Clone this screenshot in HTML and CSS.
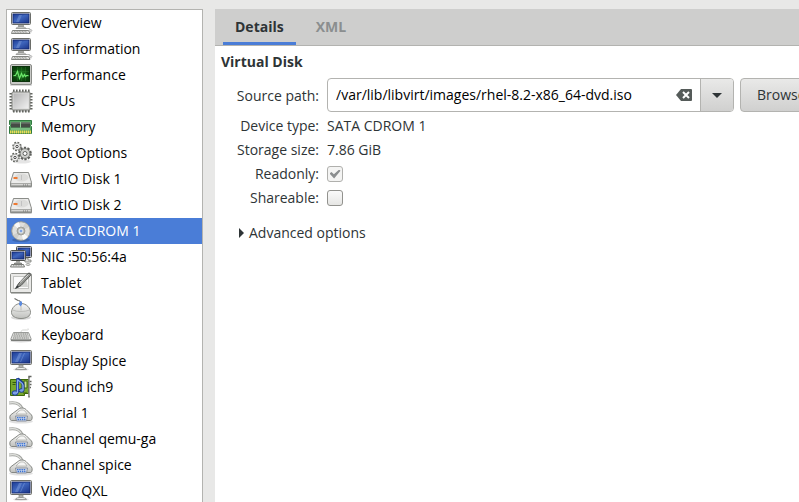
FILE: index.html
```html
<!DOCTYPE html>
<html lang="en">

<head>
  <meta charset="UTF-8">
  <title>Virtual Machine Details</title>
  <link rel="stylesheet" href="styles.css">
</head>

<body>
  <svg class="sprite" aria-hidden="true">
    <defs>
      <linearGradient id="screen" x1="0" y1="0" x2="1" y2="1">
        <stop offset="0" stop-color="#1d3c94"/>
        <stop offset=".45" stop-color="#3f66bd"/>
        <stop offset="1" stop-color="#1a3488"/>
      </linearGradient>
      <linearGradient id="metal" x1="0" y1="0" x2="0" y2="1">
        <stop offset="0" stop-color="#f8f8f7"/>
        <stop offset="1" stop-color="#bfc0bd"/>
      </linearGradient>
      <linearGradient id="chip" x1="0" y1="0" x2="1" y2="1">
        <stop offset="0" stop-color="#b4b4b4"/>
        <stop offset="1" stop-color="#f0f0f0"/>
      </linearGradient>
      <radialGradient id="scope">
        <stop offset="0" stop-color="#1f7d1f"/>
        <stop offset="1" stop-color="#0a3f0c"/>
      </radialGradient>
    </defs>

    <symbol id="computer" viewBox="0 0 24 24">
      <ellipse cx="13" cy="21" rx="10" ry="2" fill="#000" opacity=".12"/>
      <rect x="2.500" y="1.500" width="19" height="12" rx="1" fill="#dcdcda" stroke="#6b6d69"/>
      <rect x="4" y="3" width="16" height="9" fill="url(#screen)" stroke="#12276e" stroke-width=".8"/>
      <path d="M10 4h3l-3 7H7z" fill="#8fa9e2" opacity=".4"/>
      <path d="M9 14h6v2h-6z" fill="#a5a6a3"/>
      <path d="M7 17.500c0-1 2-1.500 5-1.500s5 .5 5 1.500z" fill="#f3f3f2" stroke="#8a8c88" stroke-width=".8"/>
      <path d="M3.500 19.500h16l1.500 3H2.500z" fill="#e8e8e6" stroke="#777975" stroke-width=".9"/>
      <path d="M5 20.500h13M4.500 21.500h14" stroke="#8c8e8a" stroke-dasharray="1 .6" stroke-width=".7"/>
      <path d="M17 17.500c3 0 5 0 4 1.500" fill="none" stroke="#a9aba7"/>
      <ellipse cx="21.500" cy="19.500" rx="1.500" ry=".9" fill="#ddd" stroke="#999" stroke-width=".5"/>
    </symbol>

    <symbol id="display" viewBox="0 0 24 24">
      <ellipse cx="12" cy="20.500" rx="8" ry="1.500" fill="#000" opacity=".1"/>
      <rect x="1.500" y="1.500" width="21" height="14" rx="1" fill="#dcdcda" stroke="#6b6d69"/>
      <rect x="3" y="3" width="18" height="11" fill="url(#screen)" stroke="#12276e" stroke-width=".8"/>
      <path d="M10 4h3l-4 9H6zM15 4h1l-4 9h-1z" fill="#8fa9e2" opacity=".4"/>
      <path d="M10 16h4v3h-4z" fill="#b5b6b3" stroke="#858783" stroke-width=".7"/>
      <path d="M6.500 20.500c0-1.500 3-2 5.500-2s5.500.5 5.500 2z" fill="#f3f3f2" stroke="#8a8c88" stroke-width=".8"/>
    </symbol>

    <symbol id="performance" viewBox="0 0 24 24">
      <rect x="1" y="20" width="22" height="3" rx="1" fill="#000" opacity=".15"/>
      <rect x="1.500" y="1.500" width="21" height="20" rx="1.500" fill="#c9cac7" stroke="#8b8d89"/>
      <rect x="3.500" y="3.500" width="17" height="15" fill="url(#scope)" stroke="#0b320c"/>
      <path d="M4 8.500h16M4 13.500h16M8.500 4v14M12.500 4v14M16.500 4v14" stroke="#39963a" stroke-width=".3"/>
      <path d="M4.500 12.500h2l2-4 2 7 2-5 1.500 3.500 1.500-2.500 1 2 1-1h2" fill="none" stroke="#6ce86c" stroke-width="1.200"/>
    </symbol>

    <symbol id="cpu" viewBox="0 0 24 24">
      <rect x="3" y="20" width="18" height="3" fill="#000" opacity=".12"/>
      <path d="M4 1.800h17M4 22.200h17M1.800 4v17M22.200 4v17" stroke="#62645f" stroke-width="2.600" stroke-dasharray="1.600 1.400"/>
      <rect x="3" y="3" width="18" height="18" rx="1" fill="#d8d8d6" stroke="#7e807c"/>
      <rect x="4.500" y="4.500" width="15" height="15" fill="url(#chip)"/>
    </symbol>

    <symbol id="memory" viewBox="0 0 24 24">
      <path d="M.5 5.500h22v4l-1 1 1 1v7H.5v-7l1-1-1-1z" fill="#57a464" stroke="#2f7a3f"/>
      <path d="M2 7.500h9v5H2zM12 7.500h9v5h-9z" fill="#454b45"/>
      <path d="M2 8h9M12 8h9" stroke="#7b837b"/>
      <path d="M11.500 7v5.500" stroke="#8dce94"/>
      <path d="M2 14h19" stroke="#9ad29a"/>
      <path d="M1 17h21" stroke="#ecdc55" stroke-width="3" stroke-dasharray="1.400 .6"/>
    </symbol>

    <symbol id="gears" viewBox="0 0 24 24">
      <ellipse cx="13" cy="20.500" rx="9" ry="2" fill="#000" opacity=".1"/>
      <circle cx="8" cy="5.500" r="3.900" fill="#efefee" stroke="#62645f" stroke-width="1.800" stroke-dasharray="1.700 1.360"/>
      <circle cx="8" cy="5.500" r="3.300" fill="#f4f4f3" stroke="#8b8d89" stroke-width=".6"/>
      <circle cx="8" cy="5.500" r="1.200" fill="#fff" stroke="#333" stroke-width=".9"/>
      <circle cx="6" cy="16.500" r="3.900" fill="#efefee" stroke="#62645f" stroke-width="1.800" stroke-dasharray="1.700 1.360"/>
      <circle cx="6" cy="16.500" r="3.300" fill="#f4f4f3" stroke="#8b8d89" stroke-width=".6"/>
      <circle cx="6" cy="16.500" r="1.200" fill="#fff" stroke="#333" stroke-width=".9"/>
      <circle cx="16" cy="12.500" r="5.700" fill="#d0d1ce" stroke="#5d5f5b" stroke-width="2.200" stroke-dasharray="2.200 1.380"/>
      <circle cx="16" cy="12.500" r="4.800" fill="#d0d1ce" stroke="#70726e" stroke-width=".8"/>
      <circle cx="16" cy="12.500" r="2" fill="#fff" stroke="#555753" stroke-width=".9"/>
    </symbol>

    <symbol id="disk" viewBox="0 0 24 24">
      <rect x="1" y="18" width="22" height="3" rx="1.500" fill="#000" opacity=".2"/>
      <path d="M4.500 5.500h15l3 10v4h-21v-4z" fill="#a9aaa7" stroke="#8b8d89" stroke-linejoin="round"/>
      <path d="M5 6h14l3 9.500-1 .5H3l-1-.5z" fill="#ececeb"/>
      <ellipse cx="12.500" cy="10.500" rx="7" ry="4" fill="#dcdcda"/>
      <path d="M2.500 17.500h19" stroke="#d6d6d4"/>
      <path d="M14 18h6" stroke="#777" stroke-dasharray="1 1"/>
      <path d="M12.500 8v5" stroke="#bbb" stroke-width=".8"/>
      <rect x="4.500" y="10" width="4" height="2" fill="#ee7a33"/>
    </symbol>

    <symbol id="cdrom" viewBox="0 0 24 24">
      <ellipse cx="12" cy="21" rx="9" ry="2" fill="#000" opacity=".18"/>
      <circle cx="12" cy="12" r="9.300" fill="#dfdfdc" stroke="#9a9b93"/>
      <path d="M12 12L5 6a9 9 0 0 1 5-3zM12 12l7 6a9 9 0 0 1-5 3z" fill="#fff" opacity=".8"/>
      <path d="M12 12l4-8a9 9 0 0 1 4 4zM12 12l-4 8a9 9 0 0 1-4-4z" fill="#c7c8c3" opacity=".7"/>
      <circle cx="12" cy="12" r="4" fill="#b5b6b0" stroke="#90918b" stroke-width=".7"/>
      <circle cx="12" cy="12" r="2" fill="#7fa3e4" stroke="#f1f1ef"/>
    </symbol>

    <symbol id="network" viewBox="0 0 24 24">
      <rect x="7.500" y="1.500" width="15" height="11" rx="1" fill="#e3e3e1" stroke="#4c4e4a"/>
      <rect x="9" y="3" width="12" height="8" fill="url(#screen)" stroke="#12276e" stroke-width=".8"/>
      <path d="M15 13h4v2h3v2h-6z" fill="#dededc" stroke="#777975" stroke-width=".8"/>
      <rect x="1.500" y="5.500" width="15" height="10" rx="1" fill="#e3e3e1" stroke="#4c4e4a"/>
      <rect x="3" y="7" width="12" height="7" fill="url(#screen)" stroke="#12276e" stroke-width=".8"/>
      <path d="M7 16h4v1.500H7z" fill="#a5a6a3"/>
      <path d="M5 18.500c1-1 7-1 8 0z" fill="#f3f3f2" stroke="#777975" stroke-width=".8"/>
      <path d="M2.500 19.500h12l1 2.500h-14z" fill="#e8e8e6" stroke="#6b6d69" stroke-width=".9"/>
      <path d="M4 20.800h9" stroke="#8c8e8a" stroke-dasharray="1 .6"/>
      <ellipse cx="19" cy="19.500" rx="2" ry="1" fill="#e5e5e3" stroke="#858783" stroke-width=".7"/>
    </symbol>

    <symbol id="tablet" viewBox="0 0 24 24">
      <path d="M2.500 2.500h19c1 0 1 1 1 1v17c0 1-1 1-1 1h-20v-18c0-1 1-1 1-1z" fill="#e9e9e7" stroke="#90928e"/>
      <path d="M2 22h20" stroke="#777975"/>
      <rect x="4.500" y="5.500" width="15" height="12" fill="#fbfbfb" stroke="#c3c4c1"/>
      <path d="M7 16c4-1 6-5 11-6l1 6z" fill="#d2d3d0"/>
      <path d="M6.500 17.500l3-5L19 2.500c1-1 3.500 0 2.500 2L12 14.500z" fill="#8f918d" stroke="#4b4d49" stroke-width=".9"/>
      <path d="M11 11.500l8.500-8" stroke="#dededc"/>
      <path d="M6.500 17.500l2-3 1.500 1.500z" fill="#2e3436"/>
    </symbol>

    <symbol id="mouse" viewBox="0 0 24 24">
      <ellipse cx="12" cy="20.500" rx="10" ry="2.500" fill="#000" opacity=".15"/>
      <path d="M5.500 1.500l3.500 2c2 0 3 1 3 4" fill="none" stroke="#6b6d69" stroke-width="1.200"/>
      <path d="M12 6.500c5.500 0 9.500 4.500 9.500 9 0 3.500-4 6-9.500 6s-9.500-2.500-9.500-6c0-4.500 4-9 9.500-9z" fill="url(#metal)" stroke="#888a85"/>
      <path d="M3.500 13c4 2 13 2 17 0M12 8v5.500" fill="none" stroke="#b4b5b2" stroke-width=".8"/>
      <path d="M10.500 4.500h2.500v3l-1.500 2-1.500-2z" fill="#5b8be0"/>
    </symbol>

    <symbol id="keyboard" viewBox="0 0 24 24">
      <ellipse cx="12" cy="18" rx="11" ry="1.500" fill="#000" opacity=".15"/>
      <path d="M12 10c0-3 1-3 4-3s4 0 3-1.500" fill="none" stroke="#d5d6d3"/>
      <path d="M4.500 9.500h15l2.500 6v1.500H2v-1.500z" fill="#e4e4e2" stroke="#90928e" stroke-width=".9"/>
      <path d="M5 11h14M4.500 13h15M4 15h16" stroke="#767874" stroke-width="1.200" stroke-dasharray="1.300 .5"/>
      <path d="M2 17.200h20" stroke="#5f615d"/>
    </symbol>

    <symbol id="sound" viewBox="0 0 24 24">
      <path d="M1.500 4.500h18v14h-4v2h-14z" fill="#78a82c" stroke="#3f6a0c"/>
      <path d="M3.500 7.500h4M3.500 9.500h3M14 18h4" stroke="#375d0c"/>
      <path d="M15 6h3v7h-3z" fill="#cde29c" stroke="#41660f"/>
      <path d="M22.500 1.500h-2.500v21M20 6.500h2.500M20 9.500h2.500M20 12.500h2" fill="none" stroke="#62645f" stroke-width="1.500"/>
      <path d="M20.200 3v18" stroke="#d7d8d5" stroke-width=".6"/>
      <path d="M8.500 18V3.500c1 2 5 2.500 5.500 6V15" fill="none" stroke="#183b8e" stroke-width="3"/>
      <ellipse cx="6" cy="18" rx="3" ry="2.200" fill="#7b9fe8" stroke="#183b8e"/>
      <ellipse cx="12.500" cy="15.500" rx="2.500" ry="1.800" fill="#7b9fe8" stroke="#183b8e"/>
      <path d="M8.500 18V4.500c1 2 5 2.500 5.500 5.500v5" fill="none" stroke="#8aabef" stroke-width="1.400"/>
    </symbol>

    <symbol id="serial" viewBox="0 0 24 24">
      <ellipse cx="12" cy="20.500" rx="12" ry="2" fill="#000" opacity=".12"/>
      <path d="M0 2c6-1 11 0 13.500 6" fill="none" stroke="#a5a7a3" stroke-width="3"/>
      <path d="M0 2c6-1 10 0 12.500 5" fill="none" stroke="#e0e1de" stroke-width="1.300"/>
      <path d="M9 8.500c2-2 6-2 8 0l5.500 5.500c1 1 1 5.500-1 5.500h-19c-2 0-2-4.500-1-5.500z" fill="url(#metal)" stroke="#858783"/>
      <path d="M10 10c2-1.500 4-1.500 6 0l2 3H7z" fill="#f5f5f4" stroke="#a7a9a5" stroke-width=".7"/>
      <path d="M6.500 15h12l-1 5h-10z" fill="#dbe2ee" stroke="#777f8d" stroke-width=".8"/>
      <path d="M8 16.700h9M8.500 18.500h8" stroke="#3c73d2" stroke-width="1.300" stroke-dasharray="1.500 .7"/>
    </symbol>
  </svg>

  <div class="window">
    <nav class="hw-list" aria-label="Hardware">
      <button class="hw-item"><svg class="icon"><use href="#computer"/></svg>Overview</button>
      <button class="hw-item"><svg class="icon"><use href="#computer"/></svg>OS information</button>
      <button class="hw-item"><svg class="icon"><use href="#performance"/></svg>Performance</button>
      <button class="hw-item"><svg class="icon"><use href="#cpu"/></svg>CPUs</button>
      <button class="hw-item"><svg class="icon"><use href="#memory"/></svg>Memory</button>
      <button class="hw-item"><svg class="icon"><use href="#gears"/></svg>Boot Options</button>
      <button class="hw-item"><svg class="icon"><use href="#disk"/></svg>VirtIO Disk 1</button>
      <button class="hw-item"><svg class="icon"><use href="#disk"/></svg>VirtIO Disk 2</button>
      <button class="hw-item selected"><svg class="icon"><use href="#cdrom"/></svg>SATA CDROM 1</button>
      <button class="hw-item"><svg class="icon"><use href="#network"/></svg>NIC :50:56:4a</button>
      <button class="hw-item"><svg class="icon"><use href="#tablet"/></svg>Tablet</button>
      <button class="hw-item"><svg class="icon"><use href="#mouse"/></svg>Mouse</button>
      <button class="hw-item"><svg class="icon"><use href="#keyboard"/></svg>Keyboard</button>
      <button class="hw-item"><svg class="icon"><use href="#display"/></svg>Display Spice</button>
      <button class="hw-item"><svg class="icon"><use href="#sound"/></svg>Sound ich9</button>
      <button class="hw-item"><svg class="icon"><use href="#serial"/></svg>Serial 1</button>
      <button class="hw-item"><svg class="icon"><use href="#serial"/></svg>Channel qemu-ga</button>
      <button class="hw-item"><svg class="icon"><use href="#serial"/></svg>Channel spice</button>
      <button class="hw-item"><svg class="icon"><use href="#display"/></svg>Video QXL</button>
    </nav>

    <main class="details">
      <div class="tabs" role="tablist">
        <button class="tab active" role="tab" aria-selected="true">Details</button>
        <button class="tab" role="tab" aria-selected="false">XML</button>
      </div>

      <form class="panel">
        <h1>Virtual Disk</h1>

        <div class="fields">
          <label for="source">Source path:</label>
          <div class="source-row">
            <div class="combo">
              <input type="text" id="source" value="/var/lib/libvirt/images/rhel-8.2-x86_64-dvd.iso">
              <button type="button" class="clear" aria-label="Clear">
                <svg width="16" height="12" viewBox="0 0 16 12">
                  <path d="M5 0h10q1 0 1 1v10q0 1-1 1H5L0 6z" fill="#555b59"/>
                  <path d="M7 3l6 6M13 3L7 9" stroke="#fff" stroke-width="2"/>
                </svg>
              </button>
              <button type="button" class="drop" aria-label="Show sources">
                <svg width="10" height="5" viewBox="0 0 10 5"><path d="M0 0h10L5 5z" fill="#2e3436"/></svg>
              </button>
            </div>
            <button type="button" class="browse">Browse...</button>
          </div>

          <span class="name">Device type:</span>
          <span>SATA CDROM 1</span>

          <span class="name">Storage size:</span>
          <span>7.86 GiB</span>

          <label for="readonly">Readonly:</label>
          <input type="checkbox" id="readonly" checked disabled>

          <label for="shareable">Shareable:</label>
          <input type="checkbox" id="shareable">
        </div>

        <details class="advanced">
          <summary>
            <svg width="5" height="10" viewBox="0 0 5 10"><path d="M0 0v10l5-5z" fill="#2e3436"/></svg>
            Advanced options
          </summary>
        </details>
      </form>
    </main>
  </div>
</body>

</html>
```
FILE: styles.css
```css
:root {
  --accent: #4a7dd7;
  --window-bg: #e8e8e7;
  --border-color: #b3b3b0;
  --text-color: #2e3436;
}

* {
  box-sizing: border-box;
}

body {
  margin: 0;
  font-family: "Open Sans", "Noto Sans", sans-serif;
  font-size: 14px;
  line-height: 24px;
  color: var(--text-color);
  background-color: var(--window-bg);
}

button,
input {
  margin: 0;
  font: inherit;
  color: inherit;
}

/* must stay rendered, or the gradients are lost */
.sprite {
  position: absolute;
  width: 0;
  height: 0;
}

.window {
  display: flex;
  gap: 12px;
  height: 100vh;
  padding: 9px 0 0 6px;
  overflow: hidden;
}

/* hardware list */
.hw-list {
  flex: 0 0 197px;
  overflow: hidden;
  border: 1px solid var(--border-color);
  border-bottom: none;
  background-color: #fff;
}

.hw-item {
  display: flex;
  align-items: center;
  gap: 8px;
  width: 100%;
  height: 26px;
  padding: 0 2px;
  border: none;
  background: none;
  color: #000;
  text-align: left;
  white-space: nowrap;
}

.hw-item.selected {
  background-color: var(--accent);
  color: #fff;
}

.icon {
  flex: none;
  width: 24px;
  height: 24px;
}

/* details side */
.details {
  flex: 1;
  min-width: 0;
  overflow: hidden;
  background-color: #fff;
}

.tabs {
  display: flex;
  gap: 8px;
  height: 37px;
  padding: 0 8px;
  border-bottom: 1px solid var(--border-color);
  background-color: #cececd;
}

.tab {
  padding: 3px 12px 0;
  border: none;
  border-bottom: 3px solid transparent;
  background: none;
  color: #8b8e8f;
  font-weight: bold;
}

.tab.active {
  border-bottom-color: var(--accent);
  color: var(--text-color);
}

.panel {
  padding: 4px 6px;
}

h1 {
  margin: 0 0 4px;
  font-size: 14px;
  line-height: 24px;
}

.fields {
  display: grid;
  grid-template-columns: 98px 1fr;
  column-gap: 8px;
  align-items: center;
}

.fields label,
.fields .name {
  text-align: right;
  white-space: nowrap;
}

.source-row {
  display: flex;
  gap: 6px;
  margin-bottom: 2px;
}

.combo {
  display: flex;
  flex: none;
  width: 407px;
  height: 34px;
  border: 1px solid var(--border-color);
  border-radius: 4px;
  overflow: hidden;
}

.combo input {
  flex: 1;
  min-width: 0;
  padding: 0 8px;
  border: none;
  outline: none;
  background: none;
  color: #000;
}

.combo button {
  display: flex;
  align-items: center;
  justify-content: center;
  border: none;
}

.combo .clear {
  width: 32px;
  background: none;
}

.combo .drop {
  width: 33px;
  border-left: 1px solid var(--border-color);
}

.combo .drop,
.browse {
  background: linear-gradient(#e9e9e8, #d0d0cf);
}

.browse {
  flex: none;
  height: 34px;
  padding: 0 16px;
  border: 1px solid var(--border-color);
  border-radius: 4px;
}

input[type="checkbox"] {
  display: grid;
  place-items: center;
  width: 16px;
  height: 16px;
  appearance: none;
  border: 1px solid #92928e;
  border-radius: 3px;
  background: linear-gradient(#fafafa, #e6e6e4);
}

input[type="checkbox"]:disabled {
  border-color: #b0b0ad;
  background: #f4f4f3;
}

input[type="checkbox"]:checked::before {
  content: "";
  width: 11px;
  height: 9px;
  background-color: #8b8e8f;
  clip-path: polygon(0 45%, 18% 28%, 40% 52%, 88% 0, 100% 14%, 42% 100%);
}

.advanced {
  margin-top: 11px;
  padding-left: 18px;
}

.advanced summary {
  display: flex;
  align-items: center;
  gap: 5px;
  list-style: none;
}
```
